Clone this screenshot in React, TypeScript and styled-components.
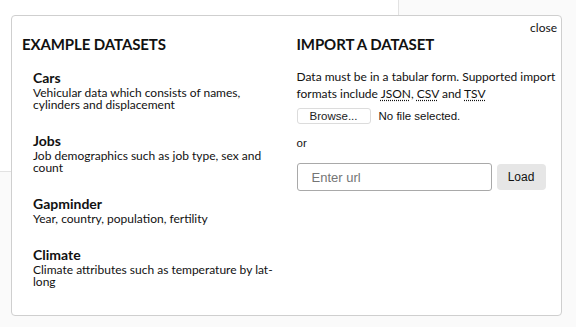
import { FC } from 'react';
import styled, { createGlobalStyle } from 'styled-components';

interface Dataset {
    name: string
    description: string
}

const datasets: Dataset[] = [
    { name: 'Cars', description: 'Vehicular data which consists of names, cylinders and displacement' },
    { name: 'Jobs', description: 'Job demographics such as job type, sex and count' },
    { name: 'Gapminder', description: 'Year, country, population, fertility' },
    { name: 'Climate', description: 'Climate attributes such as temperature by lat-long' },
]

const GlobalStyle = createGlobalStyle`
    html, body {
        margin: 0;
        padding: 0;
        background: #fafafa;
        font-family: Lato, "Open Sans", sans-serif;
        color: #111;
    }
`

const Page = styled.div`
    position: relative;
    width: 576px;
    height: 327px;
    overflow: hidden;
`

const BackPanel = styled.div`
    width: 399px;
    height: 172px;
    background: #fff;
    border-right: 1px solid #e2e2e2;
    border-bottom: 1px solid #e2e2e2;
    box-sizing: border-box;
`

const Modal = styled.div`
    position: absolute;
    left: 11px;
    top: 15px;
    width: 551px;
    height: 301px;
    box-sizing: border-box;
    background: #fff;
    border: 1px solid #cfcfcf;
    border-radius: 4px;
`

const CloseLink = styled.a`
    position: absolute;
    top: 4px;
    right: 4px;
    font-size: 12px;
    color: #111;
    cursor: pointer;
`

const Columns = styled.div`
    display: grid;
    grid-template-columns: 1fr 1fr;
    padding-top: 19px;
`

const Column = styled.div`
    padding: 0 4px 0 10px;
`

const Heading = styled.h2`
    margin: 0 0 14px;
    font-size: 15px;
    font-weight: 700;
    line-height: 18px;
    text-transform: uppercase;
    letter-spacing: -0.1px;
`

const DatasetList = styled.div`
    display: flex;
    flex-direction: column;
    gap: 21px;
    padding: 2px 0 0 11px;
`

const DatasetItem = styled.div`
    cursor: pointer;
`

const DatasetName = styled.div`
    font-size: 14px;
    font-weight: 700;
    line-height: 18px;
`

const DatasetDescription = styled.div`
    font-size: 12px;
    line-height: 12px;
`

const Paragraph = styled.p`
    margin: 0;
    padding-top: 1px;
    font-size: 12px;
    line-height: 17px;
`

const Abbr = styled.abbr`
    text-decoration: underline dotted;
    text-underline-offset: 2px;
`

const FileRow = styled.div`
    display: flex;
    align-items: center;
    gap: 8px;
    margin-top: 6px;
    font-family: "Liberation Sans", sans-serif;
    font-size: 11.5px;
`

const BrowseButton = styled.button`
    height: 16px;
    width: 74px;
    padding: 0;
    font-family: "Liberation Sans", sans-serif;
    font-size: 11.5px;
    color: #222;
    background: #fff;
    border: 1px solid #dcdcdc;
    border-radius: 3px;
`

const OrText = styled.div`
    margin-top: 12px;
    font-family: "Liberation Sans", sans-serif;
    font-size: 11.5px;
    line-height: 14px;
`

const UrlRow = styled.div`
    display: flex;
    align-items: center;
    gap: 5px;
    margin-top: 13px;
`

const UrlInput = styled.input`
    box-sizing: border-box;
    width: 195px;
    height: 28px;
    padding: 0 14px;
    font-family: "Liberation Sans", sans-serif;
    font-size: 13px;
    border: 1px solid #a9a9a9;
    border-radius: 3px;
    outline: none;

    &::placeholder {
        color: #757575;
    }
`

const LoadButton = styled.button`
    box-sizing: border-box;
    width: 49px;
    height: 26px;
    padding: 0;
    font-family: "Liberation Sans", sans-serif;
    font-size: 12px;
    color: #111;
    background: #e6e6e6;
    border: none;
    border-radius: 4px;
`

const App: FC = () => {
    return (
        <Page>
            <GlobalStyle />
            <BackPanel />
            <Modal>
                <CloseLink>close</CloseLink>
                <Columns>
                    <Column>
                        <Heading>Example Datasets</Heading>
                        <DatasetList>
                            {datasets.map((d) => (
                                <DatasetItem key={d.name}>
                                    <DatasetName>{d.name}</DatasetName>
                                    <DatasetDescription>{d.description}</DatasetDescription>
                                </DatasetItem>
                            ))}
                        </DatasetList>
                    </Column>
                    <Column>
                        <Heading>Import a Dataset</Heading>
                        <Paragraph>
                            Data must be in a tabular form. Supported import formats include{' '}
                            <Abbr>JSON</Abbr>, <Abbr>CSV</Abbr> and <Abbr>TSV</Abbr>
                        </Paragraph>
                        <FileRow>
                            <BrowseButton>Browse...</BrowseButton>
                            <span>No file selected.</span>
                        </FileRow>
                        <OrText>or</OrText>
                        <UrlRow>
                            <UrlInput placeholder="Enter url" />
                            <LoadButton>Load</LoadButton>
                        </UrlRow>
                    </Column>
                </Columns>
            </Modal>
        </Page>
    )
}

export default App
